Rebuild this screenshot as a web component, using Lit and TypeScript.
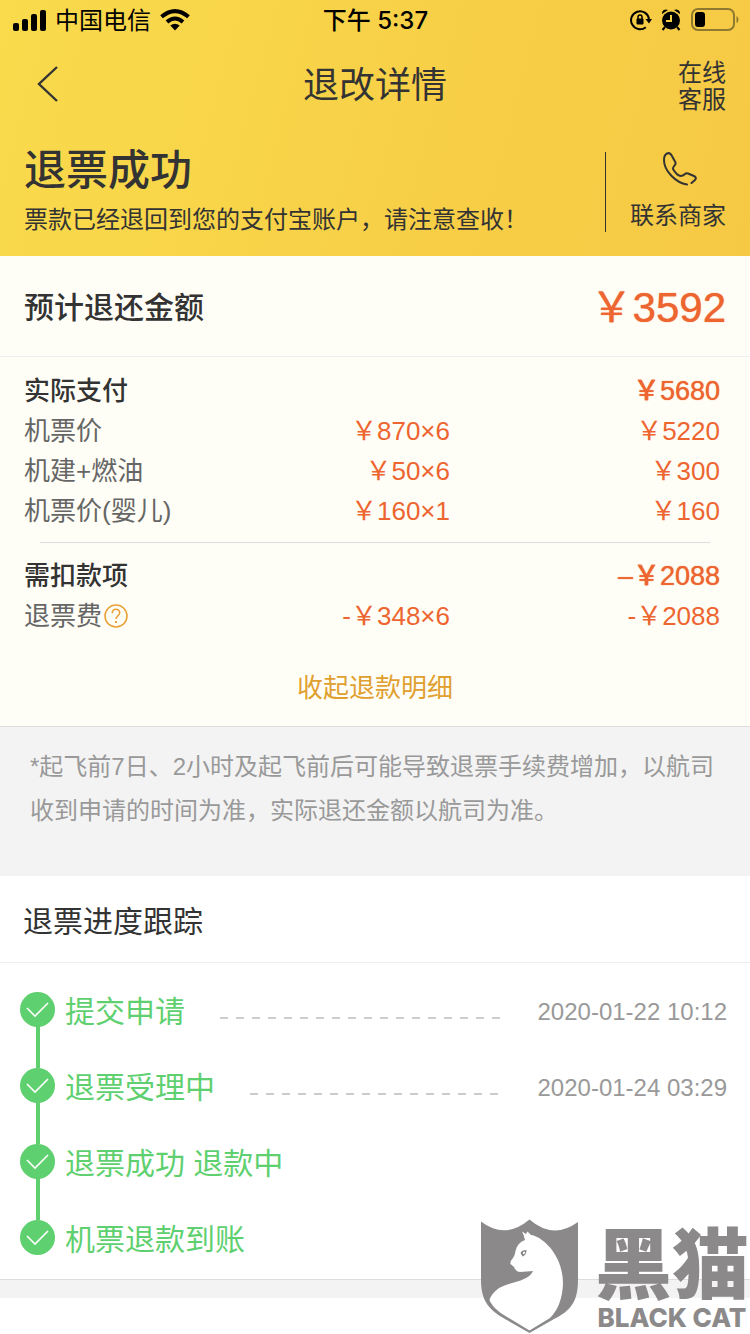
import { LitElement, html, css } from "lit";
import { customElement, state } from "lit/decorators.js";

interface PriceRow {
  label: string;
  unit?: string;
  total: string;
  strong?: boolean;
  help?: boolean;
}

const paid: PriceRow[] = [
  { label: "实际支付", total: "￥5680", strong: true },
  { label: "机票价", unit: "￥870×6", total: "￥5220" },
  { label: "机建+燃油", unit: "￥50×6", total: "￥300" },
  { label: "机票价(婴儿)", unit: "￥160×1", total: "￥160" },
];

const deducted: PriceRow[] = [
  { label: "需扣款项", total: "–￥2088", strong: true },
  { label: "退票费", unit: "-￥348×6", total: "-￥2088", help: true },
];

const steps = [
  { label: "提交申请", time: "2020-01-22 10:12" },
  { label: "退票受理中", time: "2020-01-24 03:29" },
  { label: "退票成功 退款中", time: "" },
  { label: "机票退款到账", time: "" },
];

@customElement("status-bar")
export class StatusBar extends LitElement {
  static styles = css`
    :host {
      display: grid;
      grid-template-columns: 1fr auto 1fr;
      align-items: center;
      height: 40px;
      padding: 0 11px 0 12px;
      color: #000;
      font-size: 24px;
      line-height: 38px;
    }
    .left { display: flex; align-items: center; gap: 8px; }
    .right { display: flex; align-items: center; justify-content: flex-end; gap: 9px; }
    .carrier, .clock { padding-top: 2px; }
    .clock { font-family: "Inter", "Noto Sans CJK SC", sans-serif; font-weight: 500; }
    svg { display: block; }
  `;

  render() {
    return html`
      <div class="left">
        <svg width="35" height="22" viewBox="0 0 35 22" aria-hidden="true">
          <rect x="1" y="14" width="6" height="8" rx="2" />
          <rect x="10" y="10" width="6" height="12" rx="2" />
          <rect x="19" y="5" width="6" height="17" rx="2" />
          <rect x="28" y="1" width="6" height="21" rx="2" />
        </svg>
        <span class="carrier">中国电信</span>
        <svg width="32" height="22" viewBox="0 0 32 22" aria-hidden="true">
          <g fill="none" stroke="#000" stroke-width="4">
            <path d="M2.500 7.800Q16 -3.500 29.500 7.800" />
            <path d="M8 13Q16 6 24 13" />
          </g>
          <path d="M11.300 16.500Q16 13 20.700 16.500L16 21.500Z" />
        </svg>
      </div>
      <span class="clock">下午 5:37</span>
      <div class="right">
        <svg width="22" height="22" viewBox="0 0 22 22" aria-hidden="true">
          <path d="M15.800 18.200A9 9 0 1 1 19 10" fill="none" stroke="#000" stroke-width="2" />
          <path d="M15.500 10h6.500l-3 4.500z" />
          <rect x="6.500" y="9.500" width="7" height="6" rx="1" />
          <path d="M8 10V8a2 2 0 0 1 4 0v2" fill="none" stroke="#000" stroke-width="1.500" />
        </svg>
        <svg width="20" height="22" viewBox="4 0 20 22" aria-hidden="true">
          <circle cx="14" cy="11.500" r="9" />
          <path d="M5 5A4 4 0 0 1 11 1ZM23 5A4 4 0 0 0 17 1Z" />
          <path d="M8 18l-2.500 3M20 18l2.500 3" stroke="#000" stroke-width="2" />
          <path d="M14 6v6H9" fill="none" stroke="#f7cf47" stroke-width="2" />
        </svg>
        <svg width="49" height="24" viewBox="0 0 49 24" aria-hidden="true">
          <rect x="2" y="1" width="42" height="21" rx="6" fill="none" stroke="#8f792f" stroke-width="2" />
          <rect x="5" y="4" width="10" height="15" rx="3" />
          <path d="M46.500 8v7q2-1 2-3.500T46.500 8z" fill="#8f792f" />
        </svg>
      </div>
    `;
  }
}

@customElement("price-row")
export class PriceRowElement extends LitElement {
  static properties = { row: { attribute: false } };
  declare row: PriceRow;

  static styles = css`
    :host {
      display: grid;
      grid-template-columns: 1fr 1fr 1fr;
      align-items: center;
      padding-top: 2px;
      color: #666;
      font-size: 26px;
      line-height: 38px;
    }
    .label { display: flex; align-items: center; gap: 2px; white-space: nowrap; }
    .money { color: #ed6530; text-align: right; padding-right: 6px; }
    .unit { padding-right: 42px; }
    .label.strong { color: #333; font-weight: 500; }
    .money.strong { font-size: 27px; font-weight: 500; text-shadow: 0 0 1px #ed6530; }
    .help { display: flex; padding: 0; border: 0; background: none; cursor: pointer; }
  `;

  render() {
    const { label, unit, total, strong, help } = this.row;
    const weight = strong ? "strong" : "";
    return html`
      <span class="label ${weight}">${label}${help
        ? html`<button class="help" aria-label="退票费说明">
            <svg width="24" height="24" viewBox="0 0 24 24" fill="none" stroke="#e9a23b" aria-hidden="true">
              <circle cx="12" cy="12" r="11" stroke-width="1.600" />
              <path d="M8.300 9.200C8.300 4 15.700 4 15.700 8.800C15.700 11.700 12 12 12 15" stroke-width="1.600" />
              <path d="M12 17v2" stroke-width="2" />
            </svg>
          </button>`
        : ""}</span>
      <span class="money unit">${unit}</span>
      <span class="money ${weight}">${total}</span>
    `;
  }
}

@customElement("brand-mark")
export class BrandMark extends LitElement {
  static styles = css`
    :host { display: flex; align-items: flex-start; gap: 16px; color: #8c898a; }
    svg { display: block; }
    .words { display: flex; flex-direction: column; align-items: center; white-space: nowrap; }
    .cn { font: 900 77px/84px "Noto Sans CJK SC", sans-serif; }
    .en { font: 800 26px/32px "Inter", sans-serif; }
  `;

  render() {
    return html`
      <svg width="99" height="116" viewBox="0 0 99 116" aria-hidden="true">
        <path d="M1 3.500Q25 22 49.500 1.500Q73 22 98 4V62C98 84 90 93 74 101L49.500 115L25 101C10 92 1 84 1 62Z" fill="#8c898a" />
        <path d="M42 13.500L46 16L47.500 13.500L51 17C58 18 66 24 72 32Q83 47 83 66Q82 88 70 100L49.500 112.500L27 99C17 93 12 88 9.500 82Q11 76 19 70C28 65 36 65 45 60.500Q51 58 53 53L40 54Q36 54 34 49L30.500 46Q30 43 33 40Q35 37 35.500 33Q37 25 45 22Q44 17 42 13.500Z" fill="#fff" />
        <path d="M40.500 35q1-3 6-3q0 5-4 6.500z" fill="#8c898a" />
        <path d="M43 34.500q2-2 2 0t-2 1.500z" fill="#fff" />
      </svg>
      <div class="words">
        <span class="cn">黑猫</span>
        <span class="en">BLACK CAT</span>
      </div>
    `;
  }
}

@customElement("app-root")
export class AppRoot extends LitElement {
  @state() private open = true;

  static styles = css`
    :host {
      display: block;
      position: relative;
      height: 100vh;
      overflow: hidden;
      background: #fff;
      color: #333;
      font-family: "Liberation Sans", "Noto Sans CJK SC", sans-serif;
    }
    * { box-sizing: border-box; }
    button { font: inherit; color: inherit; border: 0; background: none; padding: 0; cursor: pointer; }
    h1, h2, p, ol { margin: 0; padding: 0; }
    a { color: inherit; text-decoration: none; }
    svg { display: block; }

    .hero { height: 256px; background: linear-gradient(105deg, #f9db4c, #f7ce46 65%, #f6c944); }
    .nav { display: grid; grid-template-columns: 1fr auto 1fr; align-items: center; height: 88px; padding: 0 24px; }
    .back { justify-self: start; padding: 0 12px; }
    .title { padding-top: 4px; font-size: 36px; font-weight: 400; line-height: 84px; }
    .service { justify-self: end; width: 48px; padding-top: 4px; font-size: 24px; line-height: 27px; }
    .result { display: flex; padding: 16px 24px 0; }
    .outcome { flex: 1; }
    .outcome h2 { font-size: 42px; line-height: 54px; font-weight: 500; }
    .outcome p { font-size: 24px; line-height: 44px; }
    .contact { display: flex; flex-direction: column; align-items: center; gap: 14px; height: 80px; margin-top: 8px; padding-left: 24px; border-left: 1px solid #333; font-size: 24px; line-height: 32px; }

    .amounts { background: #fffef6; border-bottom: 1px solid #ddd; }
    .estimate { display: flex; align-items: center; justify-content: space-between; height: 101px; padding: 4px 24px 0; line-height: 96px; border-bottom: 1px solid #eee; }
    .estimate h2 { font-size: 30px; font-weight: 500; }
    .sum { font-size: 42px; color: #ed6530; text-shadow: 0 0 1px #ed6530; }
    .details { padding: 13px 24px 0; }
    .rule { height: 1px; margin: 12px 16px; background: #ddd; }
    .toggle { display: block; width: 100%; height: 91px; padding-top: 14px; font-size: 26px; line-height: 40px; color: #e0a030; }
    .note { height: 149px; padding: 18px 30px; background: #f3f3f3; color: #999; font-size: 24px; line-height: 44px; }

    .heading { height: 87px; padding-left: 23px; font-size: 30px; line-height: 92px; font-weight: 400; border-bottom: 1px solid #eee; }
    .steps { list-style: none; padding: 10px 23px 2px 20px; border-bottom: 1px solid #ddd; }
    .step { display: flex; align-items: center; height: 76px; padding-top: 2px; line-height: 74px; }
    .name { margin-left: 10px; font-size: 30px; color: #5fd06f; }
    .dash { flex: 1; height: 2px; margin: 12px 34px 0 35px; background: repeating-linear-gradient(90deg, #ccc 0 8px, transparent 8px 16px); }
    .time { font-size: 24px; color: #999; }
    .track { display: grid; grid-template-rows: 34px 42px; justify-items: center; align-self: flex-start; margin-top: 17px; width: 35px; height: 76px; }
    .link { width: 4px; height: 42px; background: #5fd06f; }
    .band { height: 18px; background: #f3f3f3; }
    .next { padding: 34px 96px; font-size: 24px; line-height: 30px; color: #999; }
    .mark { position: absolute; right: 1px; bottom: 0; }
  `;

  render() {
    return html`
      <header class="hero">
        <status-bar></status-bar>
        <nav class="nav">
          <button class="back" aria-label="返回">
            <svg width="24" height="36" viewBox="0 0 24 36" fill="none" stroke="#333" stroke-width="2.400" aria-hidden="true">
              <path d="M21 1L3 18L21 35" />
            </svg>
          </button>
          <h1 class="title">退改详情</h1>
          <a class="service" href="#service">在线客服</a>
        </nav>
        <div class="result">
          <div class="outcome">
            <h2>退票成功</h2>
            <p>票款已经退回到您的支付宝账户，请注意查收！</p>
          </div>
          <button class="contact">
            <svg width="38" height="34" viewBox="-4 1 38 34" fill="none" stroke="#333" stroke-width="2" stroke-linecap="round" stroke-linejoin="round" aria-hidden="true">
              <path d="M24 33.500C13 32 1 20 1 9Q1 4 4 2.500Q7 1 9 5L12.500 11.500C13.500 14 9.500 15 10 18C12 21.500 15 24.500 17.500 25Q20 25 22 23Q23 22 25 22.500L31 25Q34 26.500 32 29L28.500 32" />
            </svg>
            <span>联系商家</span>
          </button>
        </div>
      </header>
      <section class="amounts">
        <div class="estimate"><h2>预计退还金额</h2><span class="sum">￥3592</span></div>
        <div class="details">
          ${this.open
            ? html`
                ${paid.map((row) => html`<price-row .row=${row}></price-row>`)}
                <div class="rule"></div>
                ${deducted.map((row) => html`<price-row .row=${row}></price-row>`)}
              `
            : ""}
          <button class="toggle" @click=${() => (this.open = !this.open)}>${this.open ? "收起退款明细" : "展开退款明细"}</button>
        </div>
      </section>
      <p class="note">*起飞前7日、2小时及起飞前后可能导致退票手续费增加，以航司收到申请的时间为准，实际退还金额以航司为准。</p>
      <section>
        <h2 class="heading">退票进度跟踪</h2>
        <ol class="steps">
          ${steps.map(
            (step, i) => html`<li class="step">
              <span class="track">
                <svg width="35" height="35" viewBox="0 0 35 35" aria-hidden="true">
                  <circle cx="17.500" cy="17.500" r="17.500" fill="#5fd06f" />
                  <path d="M7 16L15 24L28 11" fill="none" stroke="#fff" stroke-width="1.600" />
                </svg>
                ${i < steps.length - 1 ? html`<span class="link"></span>` : ""}
              </span>
              <span class="name">${step.label}</span>
              ${step.time ? html`<span class="dash"></span><time class="time">${step.time}</time>` : ""}
            </li>`
          )}
        </ol>
      </section>
      <div class="band"></div>
      <p class="next">说明</p>
      <brand-mark class="mark"></brand-mark>
    `;
  }
}
